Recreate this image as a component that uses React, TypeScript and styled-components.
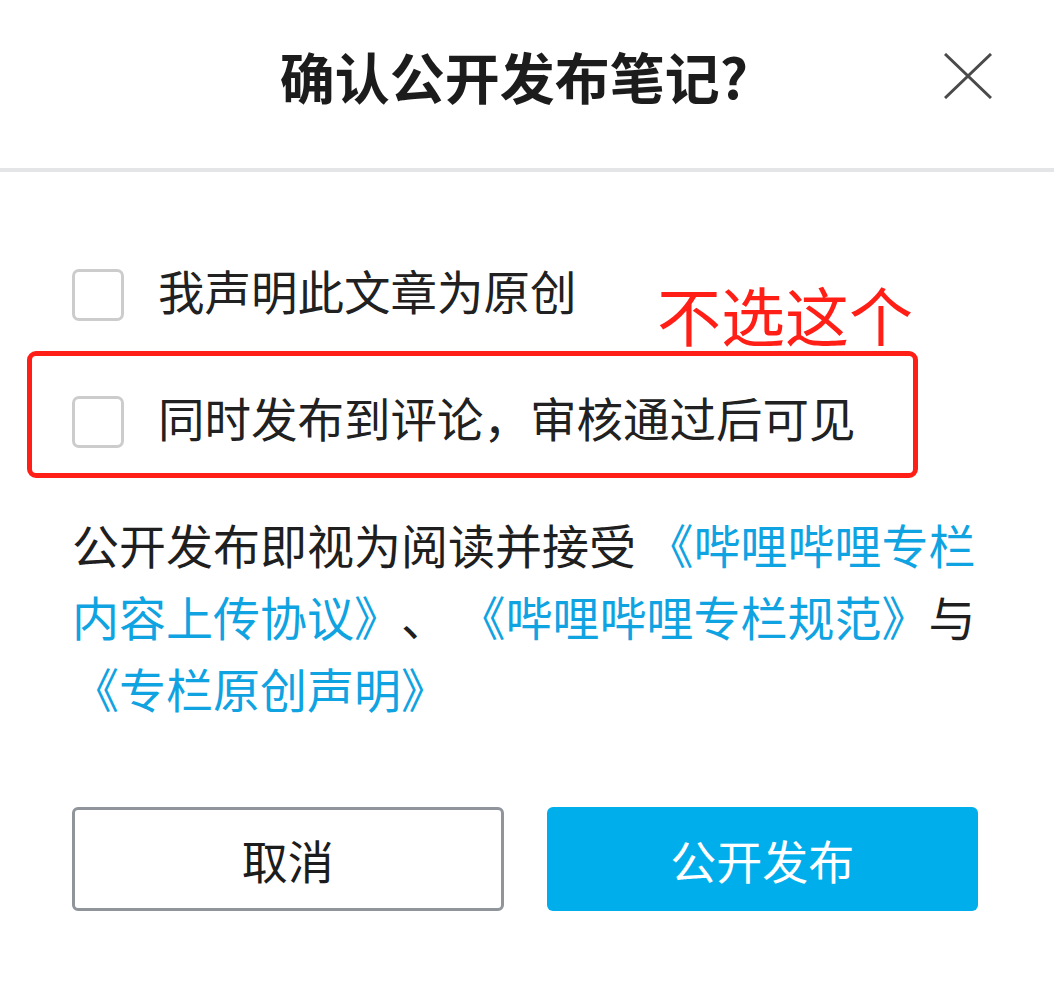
import React from "react";
import styled, { createGlobalStyle } from "styled-components";

const Global = createGlobalStyle`
  html, body { margin: 0; padding: 0; background: #ffffff; }
  body { font-family: "Noto Sans CJK SC", "Noto Sans", sans-serif; text-spacing-trim: space-all; }
  * { box-sizing: border-box; }
`;

const Dialog = styled.div`
  width: 1054px;
  height: 993px;
  background: #ffffff;
  display: flex;
  flex-direction: column;
  font-family: "Noto Sans CJK SC", "Noto Sans", sans-serif;
  text-spacing-trim: space-all;
`;

const Header = styled.header`
  height: 172px;
  border-bottom: 4px solid #e3e5e7;
  display: grid;
  grid-template-columns: 1fr auto 1fr;
  align-items: center;
  padding: 0 62px 18px 0;
`;

const Title = styled.h1`
  grid-column: 2;
  margin: 0;
  padding-left: 36px;
  font-size: 55px;
  line-height: 64px;
  font-weight: 700;
  color: #1c1c1c;
  letter-spacing: 0;
`;

const CloseButton = styled.button`
  grid-column: 3;
  justify-self: end;
  margin-top: 1px;
  width: 48px;
  height: 46px;
  padding: 0;
  border: none;
  background: transparent;
  display: flex;
  cursor: pointer;
`;

const Body = styled.main`
  flex: 1;
  display: flex;
  flex-direction: column;
  padding: 97px 72px 0 72px;
`;

const CheckRow = styled.label<{ $gap?: number }>`
  position: relative;
  display: flex;
  align-items: center;
  gap: 34px;
  height: 52px;
  margin-bottom: ${(p) => p.$gap ?? 0}px;
  font-size: 46.5px;
  line-height: 52px;
  color: #212121;
`;

const Box = styled.span`
  flex: none;
  width: 52px;
  height: 52px;
  border: 3px solid #cccccc;
  border-radius: 7px;
  background: #ffffff;
`;

const RowText = styled.span`
  position: relative;
  top: -5px;
  white-space: nowrap;
`;

const Highlight = styled.span`
  position: absolute;
  left: -45px;
  top: -45px;
  width: 891px;
  height: 127px;
  border: 5px solid #ff1f17;
  border-radius: 9px;
  pointer-events: none;
`;

const Note = styled.span`
  position: absolute;
  left: 585px;
  top: -115px;
  font-size: 64px;
  line-height: 64px;
  color: #ff1f17;
  white-space: nowrap;
`;

const Agreement = styled.p`
  margin: 60px 0 0 0;
  font-size: 47px;
  line-height: 72px;
  color: #1f1f1f;
  text-spacing-trim: space-all;
`;

const Link = styled.a`
  color: #0fa3e2;
  text-decoration: none;
`;

const Actions = styled.div`
  display: grid;
  grid-template-columns: 1fr 1fr;
  gap: 43px;
  margin: 83px 4px 0 0;
`;

const Button = styled.button<{ $primary?: boolean }>`
  height: 104px;
  border-radius: 6px;
  border: ${(p) => (p.$primary ? "none" : "3px solid #8f959b")};
  background: ${(p) => (p.$primary ? "#00aeec" : "#ffffff")};
  color: ${(p) => (p.$primary ? "#ffffff" : "#1c1c1c")};
  font-family: "Noto Sans CJK SC", "Noto Sans", sans-serif;
  font-size: 46px;
  padding: 0;
  cursor: pointer;
`;

export default function App() {
  return (
    <>
      <Global />
      <Dialog>
        <Header>
          <Title>确认公开发布笔记?</Title>
          <CloseButton aria-label="关闭">
            <svg width="48" height="46" viewBox="0 0 48 46">
              <path d="M1 1 L47 45 M47 1 L1 45" stroke="#4a4a4a" strokeWidth="3" fill="none" />
            </svg>
          </CloseButton>
        </Header>
        <Body>
          <CheckRow $gap={75}>
            <Box />
            <RowText>我声明此文章为原创</RowText>
          </CheckRow>
          <CheckRow>
            <Box />
            <RowText>同时发布到评论，审核通过后可见</RowText>
            <Highlight />
            <Note>不选这个</Note>
          </CheckRow>
          <Agreement>
            公开发布即视为阅读并接受 <Link>《哔哩哔哩专栏内容上传协议》</Link>、 <Link>《哔哩哔哩专栏规范》</Link>与
            <Link>《专栏原创声明》</Link>
          </Agreement>
          <Actions>
            <Button>取消</Button>
            <Button $primary>公开发布</Button>
          </Actions>
        </Body>
      </Dialog>
    </>
  );
}
